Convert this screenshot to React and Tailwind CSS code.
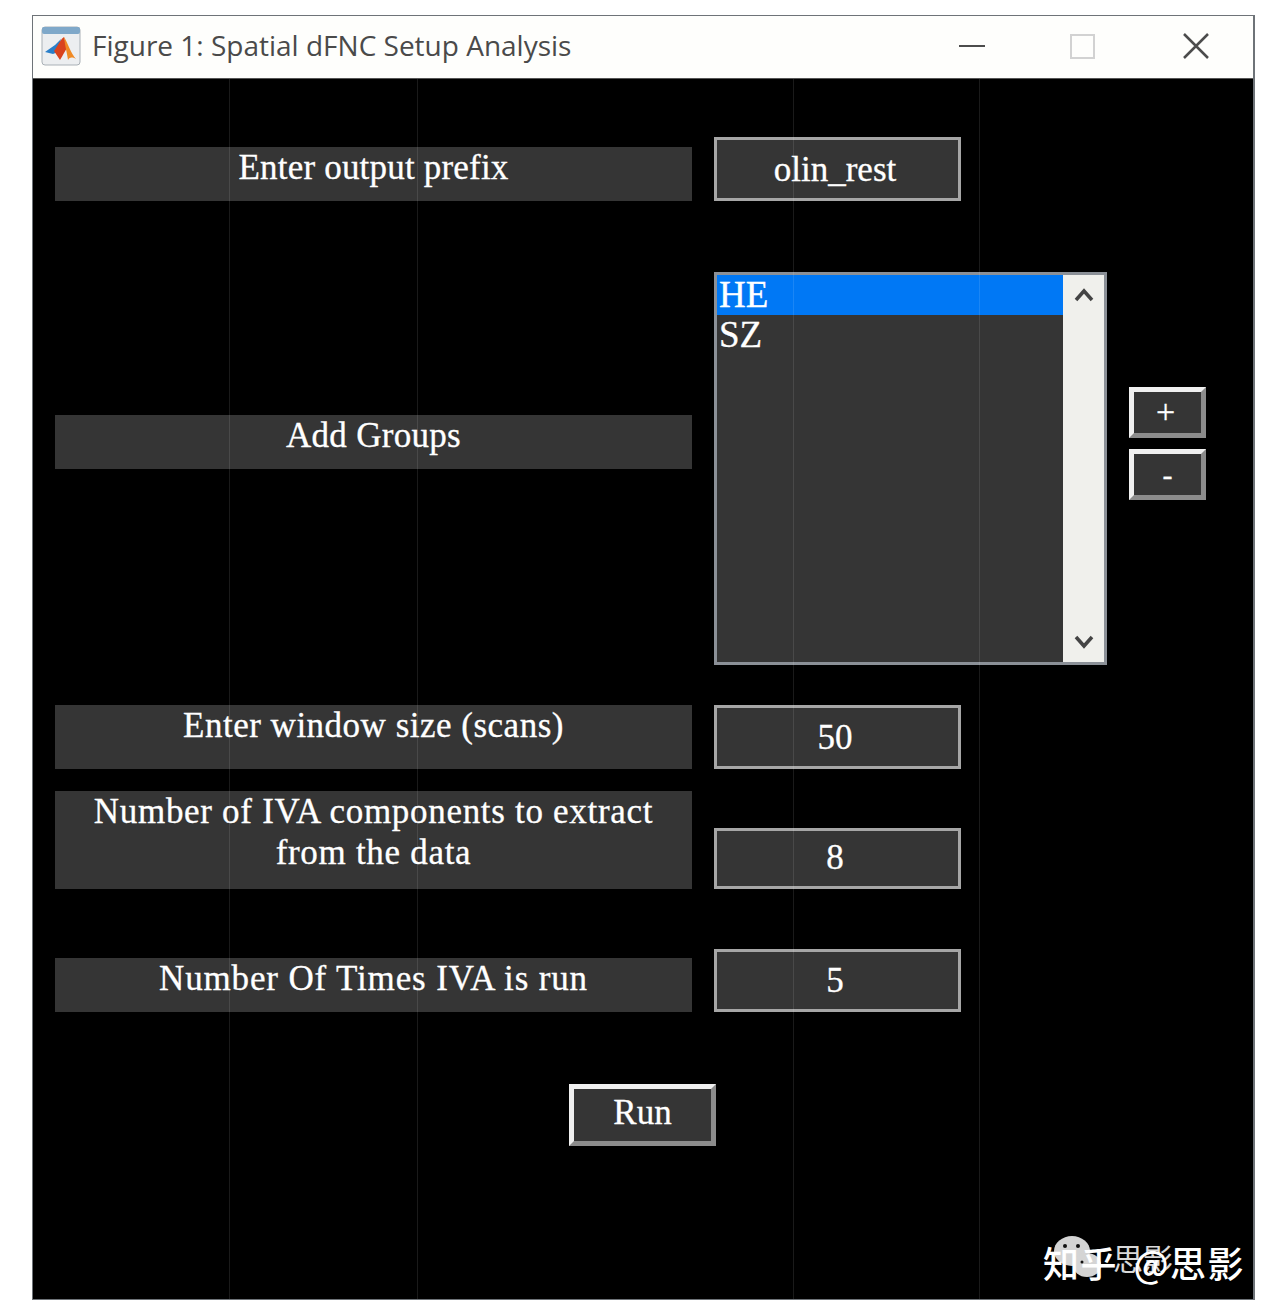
const serif = 'font-["Liberation_Serif","Noto_Sans_CJK_SC",serif]';
const heavy = '[-webkit-text-stroke:0.3px_white]';

function Label({ children, className = '' }) {
  return (
    <div className={`w-[637px] shrink-0 bg-[#353535] text-center text-[35px] leading-[41px] text-white ${heavy} ${className}`}>
      {children}
    </div>
  );
}

function Field({ value, className = '' }) {
  return (
    <div className={`w-[247px] shrink-0 border-[3px] border-[#a6a6a6] bg-[#353535] pr-[5px] text-center text-[35px] leading-[42px] text-white ${heavy} ${className}`}>
      {value}
    </div>
  );
}

function RaisedButton({ children, className = '' }) {
  return (
    <button className={`flex items-center justify-center border-[5px] border-t-[#f0f0f0] border-l-[#f0f0f0] border-r-[#8c8c8c] border-b-[#8c8c8c] bg-[#353535] text-white ${heavy} ${className}`}>
      {children}
    </button>
  );
}

function MatlabIcon() {
  return (
    <svg width="40" height="40" viewBox="0 0 40 40" className="shrink-0">
      <rect x="1" y="1" width="38" height="38" rx="3" fill="#eceef0" stroke="#a9b0b6" />
      <rect x="1" y="1" width="38" height="7" rx="2" fill="#7fa8c9" />
      <path d="M4 26l10-7 6-6-3 13-5 2z" fill="#2a7fc9" />
      <path d="M23 11c-3 2-5 6-8 11l-2 3 6 9c3-5 5-9 7-12z" fill="#d9431e" />
      <path d="M23 11c3 4 7 17 12 22-4-2-6-2-8 1-1-7-3-14-4-23z" fill="#f08a24" />
    </svg>
  );
}

function Watermark() {
  return (
    <div className="absolute left-[1010px] top-[1223px] h-[60px] w-[212px] font-['Noto_Sans_CJK_SC',sans-serif] text-white">
      <svg width="60" height="50" viewBox="0 0 60 50" className="absolute left-[10px] top-[-5px]">
        <ellipse cx="19" cy="17" rx="18" ry="15" fill="#d4d4d4" />
        <ellipse cx="34" cy="31" rx="14" ry="12" fill="#d4d4d4" />
        <circle cx="12" cy="12" r="2" fill="#111" />
        <circle cx="25" cy="12" r="2" fill="#111" />
        <circle cx="29" cy="28" r="1.5" fill="#111" />
      </svg>
      <span className="absolute left-[70px] top-[0px] whitespace-nowrap text-[30px] leading-[36px] opacity-85">思影</span>
      <span className="absolute left-0 top-[1px] whitespace-nowrap text-[36px] font-medium leading-[44px] tracking-[1.5px] [word-spacing:6px]">知乎 @思影</span>
    </div>
  );
}

export default function App() {
  return (
    <div className={`relative h-[1315px] w-[1280px] bg-white pl-8 pt-[15px] ${serif}`}>
      <div className="relative h-[1285px] w-[1223px] border border-r-2 border-[#6e7378]">
        <div className="flex h-[63px] items-center border-b border-[#555] bg-[#fefefc] pb-[2px] pl-[8px]">
          <MatlabIcon />
          <span className="ml-[11px] -mt-[2px] font-['Open_Sans',sans-serif] text-[28px] text-[#4a4a4a]">Figure 1: Spatial dFNC Setup Analysis</span>
          <div className="ml-auto flex items-center pr-[43px]">
            <span className="h-[2px] w-[26px] bg-[#4c4c4c]" />
            <span className="ml-[85px] h-[25px] w-[25px] border-2 border-[#d2d2d2]" />
            <svg width="28" height="28" viewBox="0 0 28 28" className="ml-[87px]">
              <path d="M2 2l24 24M26 2L2 26" stroke="#4c4c4c" strokeWidth="2.5" fill="none" />
            </svg>
          </div>
        </div>

        <div className="flex h-[1220px] flex-col bg-black pl-[22px] pt-[58px]">
          <div className="flex items-end gap-[22px]">
            <Label className="h-[54px] tracking-[0.2px]">Enter output prefix</Label>
            <Field value="olin_rest" className="h-[64px] pt-[9px]" />
          </div>

          <div className="mt-[71px] flex gap-[22px]">
            <Label className="mt-[143px] h-[54px] tracking-[0.3px]">Add Groups</Label>
            <div className="flex h-[393px] w-[393px] shrink-0 border-[3px] border-[#8b9097] bg-[#353535]">
              <div className={`min-w-0 flex-1 text-[37px] leading-[40px] text-white ${heavy}`}>
                <div className="bg-[#0078f5] pl-[2px]">HE</div>
                <div className="pl-[2px]">SZ</div>
              </div>
              <div className="flex w-[41px] flex-col items-center justify-between bg-[#f0f0ec] py-[13px]">
                <svg width="20" height="14" viewBox="0 0 20 14"><path d="M2 12l8-9 8 9" stroke="#444" strokeWidth="3.5" fill="none" /></svg>
                <svg width="20" height="14" viewBox="0 0 20 14"><path d="M2 2l8 9 8-9" stroke="#444" strokeWidth="3.5" fill="none" /></svg>
              </div>
            </div>
            <div className="mt-[115px] flex flex-col gap-[11px]">
              <RaisedButton className="h-[51px] w-[77px] pb-[3px] pr-[4px] text-[34px]">+</RaisedButton>
              <RaisedButton className="h-[51px] w-[77px] text-[30px]">-</RaisedButton>
            </div>
          </div>

          <div className="mt-[40px] flex gap-[22px]">
            <Label className="h-[64px] tracking-[0.5px]">Enter window size (scans)</Label>
            <Field value="50" className="h-[64px] pt-[9px]" />
          </div>

          <div className="mt-[22px] flex items-end gap-[22px]">
            <Label className="h-[98px] tracking-[0.7px]">
              Number of IVA components to extract
              <br />
              from the data
            </Label>
            <Field value="8" className="h-[61px] pt-[6px]" />
          </div>

          <div className="mt-[60px] flex items-end gap-[22px]">
            <Label className="h-[54px] tracking-[0.85px]">Number Of Times IVA is run</Label>
            <Field value="5" className="h-[63px] pt-[8px]" />
          </div>

          <RaisedButton className="ml-[514px] mt-[72px] h-[62px] w-[147px] pb-[3px] text-[35px]">Run</RaisedButton>
        </div>

        <div className="pointer-events-none absolute bottom-0 left-[196px] top-[63px] w-px bg-white/10" />
        <div className="pointer-events-none absolute bottom-0 left-[384px] top-[63px] w-px bg-white/10" />
        <div className="pointer-events-none absolute bottom-0 left-[760px] top-[63px] w-px bg-white/10" />
        <div className="pointer-events-none absolute bottom-0 left-[946px] top-[63px] w-px bg-white/10" />
        <Watermark />
      </div>
    </div>
  );
}
